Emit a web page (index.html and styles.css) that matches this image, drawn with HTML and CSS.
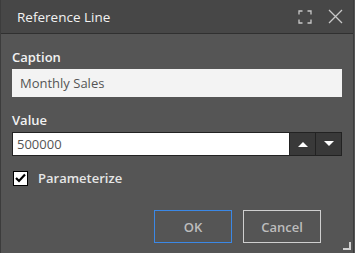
FILE: index.html
```html
<!DOCTYPE html>
<html lang="en">
<head>
    <meta charset="UTF-8">
    <title>Reference Line</title>
    <link rel="stylesheet" href="styles.css">
</head>
<body>
    <div class="dialog">
        <!-- title bar -->
        <div class="dialog-header">
            <span class="dialog-title">Reference Line</span>
            <div class="header-icons">
                <svg class="icon" width="14" height="14" viewBox="0 0 14 14">
                    <path d="M1 4.5V1H4.5M9.5 1H13V4.5M13 9.5V13H9.5M4.5 13H1V9.5" fill="none" stroke="#c8c8c8" stroke-width="1.3"/>
                </svg>
                <svg class="icon" width="15" height="15" viewBox="0 0 15 15">
                    <path d="M1 1L14 14M14 1L1 14" fill="none" stroke="#c8c8c8" stroke-width="1.3"/>
                </svg>
            </div>
        </div>

        <!-- form -->
        <div class="dialog-body">
            <div class="field-label">Caption</div>
            <div class="caption-input">Monthly Sales</div>

            <div class="field-label value-label">Value</div>
            <div class="value-row">
                <div class="value-input">500000</div>
                <div class="spin-btn">
                    <svg width="10" height="6" viewBox="0 0 10 6"><path d="M0 6L5 1L10 6Z" fill="#fff"/></svg>
                </div>
                <div class="spin-btn">
                    <svg width="10" height="6" viewBox="0 0 10 6"><path d="M0 0L5 5L10 0Z" fill="#fff"/></svg>
                </div>
            </div>

            <div class="check-row">
                <div class="checkbox">
                    <svg width="11" height="10" viewBox="0 0 11 10"><path d="M1 5L4 8L10 1.5" fill="none" stroke="#000" stroke-width="2.2"/></svg>
                </div>
                <span class="check-label">Parameterize</span>
            </div>
        </div>

        <!-- buttons -->
        <div class="dialog-footer">
            <div class="btn btn-ok">OK</div>
            <div class="btn btn-cancel">Cancel</div>
        </div>

        <div class="resize-grip"></div>
    </div>
</body>
</html>
```

FILE: styles.css
```css
body {
    margin: 0;
    padding: 0;
    background: #555555;
    font-family: "Open Sans", "Liberation Sans", sans-serif;
}

.dialog {
    position: relative;
    width: 354px;
    height: 253px;
    box-sizing: border-box;
    background: #555555;
    border-left: 1px solid #3c3c3c;
    border-right: 1px solid #3c3c3c;
    display: flex;
    flex-direction: column;
}

.dialog-header {
    height: 33px;
    background: #474747;
    border-bottom: 1px solid #303030;
    display: flex;
    align-items: center;
    padding-left: 16px;
    padding-right: 10px;
}

.dialog-title {
    flex: 1;
    color: #f2f2f2;
    font-size: 13.5px;
}

.header-icons {
    display: flex;
    align-items: center;
    gap: 16px;
}

.icon {
    display: block;
}

.dialog-body {
    padding: 14px 11px 0 11px;
}

.field-label {
    color: #f2f2f2;
    font-size: 13px;
    font-weight: 600;
    line-height: 18px;
}

.caption-input {
    margin-top: 3px;
    height: 28px;
    background: #f3f3f3;
    color: #555;
    font-size: 13px;
    line-height: 28px;
    padding-left: 8px;
}

.value-label {
    margin-top: 14px;
}

.value-row {
    margin-top: 3px;
    display: flex;
    height: 24px;
}

.value-input {
    width: 279px;
    box-sizing: border-box;
    background: #fff;
    border: 1px solid #222;
    color: #555;
    font-size: 13px;
    line-height: 22px;
    padding-left: 4px;
}

.spin-btn {
    width: 26px;
    box-sizing: border-box;
    background: #393939;
    border: 1px solid #222;
    border-left: none;
    display: flex;
    align-items: center;
    justify-content: center;
}

.check-row {
    margin-top: 13px;
    display: flex;
    align-items: center;
    gap: 10px;
    padding-left: 1px;
}

.checkbox {
    width: 15px;
    height: 15px;
    box-sizing: border-box;
    background: #fff;
    border: 1px solid #000;
    display: flex;
    align-items: center;
    justify-content: center;
}

.check-label {
    color: #e6e6e6;
    font-size: 13px;
    font-weight: 600;
}

.dialog-footer {
    margin-top: auto;
    display: flex;
    justify-content: flex-end;
    gap: 11px;
    padding: 0 32px 10px 0;
}

.btn {
    width: 78px;
    height: 33px;
    box-sizing: border-box;
    display: flex;
    align-items: center;
    justify-content: center;
    font-size: 13px;
    font-weight: 600;
    color: #bdbdbd;
}

.btn-ok {
    border: 1px solid #3b88e6;
}

.btn-cancel {
    border: 1px solid #cfcfcf;
}

.resize-grip {
    position: absolute;
    right: 2px;
    bottom: 3px;
    width: 6px;
    height: 6px;
    border-right: 2px solid #d0d0d0;
    border-bottom: 2px solid #d0d0d0;
}
```
